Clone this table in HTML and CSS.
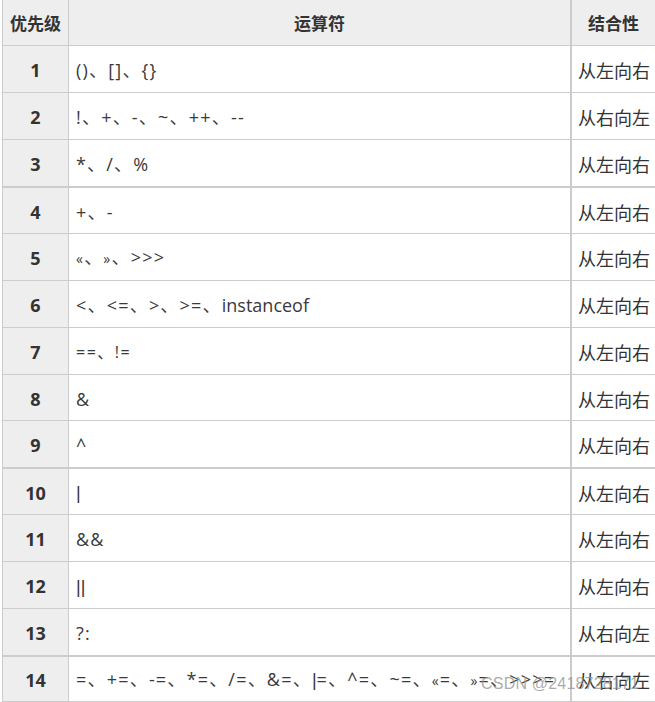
FILE: index.html
```html
<!DOCTYPE html>
<html lang="zh-CN">
<head>
<meta charset="utf-8">
<title>运算符优先级</title>
<link rel="stylesheet" href="styles.css">
</head>
<body>
<div class="page">
<table class="prec">
  <thead>
    <tr><th class="c-lvl">优先级</th><th class="c-op">运算符</th><th class="c-as">结合性</th></tr>
  </thead>
  <tbody>
    <tr class="h47"><td class="c-lvl">1</td><td class="c-op">()、[]、{}</td><td class="c-as">从左向右</td></tr>
    <tr class="h47"><td class="c-lvl">2</td><td class="c-op">!、+、-、~、++、--</td><td class="c-as">从右向左</td></tr>
    <tr class="h48 sep"><td class="c-lvl">3</td><td class="c-op">*、/、%</td><td class="c-as">从左向右</td></tr>
    <tr class="h46"><td class="c-lvl">4</td><td class="c-op">+、-</td><td class="c-as">从左向右</td></tr>
    <tr class="h47"><td class="c-lvl">5</td><td class="c-op"><span class="tiny">«</span>、<span class="tiny">»</span>、&gt;&gt;&gt;</td><td class="c-as">从左向右</td></tr>
    <tr class="h47"><td class="c-lvl">6</td><td class="c-op">&lt;、&lt;=、&gt;、&gt;=、<span class="word">instanceof</span></td><td class="c-as">从左向右</td></tr>
    <tr class="h47"><td class="c-lvl">7</td><td class="c-op small">==、!=</td><td class="c-as">从左向右</td></tr>
    <tr class="h46"><td class="c-lvl">8</td><td class="c-op">&amp;</td><td class="c-as">从左向右</td></tr>
    <tr class="h48 sep"><td class="c-lvl">9</td><td class="c-op">^</td><td class="c-as">从左向右</td></tr>
    <tr class="h46"><td class="c-lvl">10</td><td class="c-op"><span class="pipe">|</span></td><td class="c-as">从左向右</td></tr>
    <tr class="h47"><td class="c-lvl">11</td><td class="c-op">&amp;&amp;</td><td class="c-as">从左向右</td></tr>
    <tr class="h47"><td class="c-lvl">12</td><td class="c-op"><span class="pipe">||</span></td><td class="c-as">从左向右</td></tr>
    <tr class="h48 sep"><td class="c-lvl">13</td><td class="c-op">?:</td><td class="c-as">从右向左</td></tr>
    <tr class="h45"><td class="c-lvl">14</td><td class="c-op">=、+=、-=、*=、/=、&amp;=、<span class="pipe">|</span>=、^=、~=、<span class="tiny">«</span>=、<span class="tiny">»</span>=、&gt;&gt;&gt;=</td><td class="c-as">从右向左</td></tr>
  </tbody>
</table>
<div class="watermark">CSDN @2418728171</div>
</div>
</body>
</html>
```

FILE: styles.css
```css
html, body {
  margin: 0;
  padding: 0;
  background: #ffffff;
}

.page {
  position: relative;
  width: 655px;
  height: 702px;
  overflow: hidden;
  padding-left: 2px;
  box-sizing: border-box;
}

.prec {
  border-collapse: separate;
  border-spacing: 0;
  table-layout: fixed;
  width: 653px;
  border-left: 1px solid #cccccc;
  font-family: "Open Sans", "Noto Sans CJK SC", sans-serif;
  font-size: 18px;
  color: #333333;
}

.prec th,
.prec td {
  box-sizing: border-box;
  padding: 2px 0 0 0;
  border-bottom: 1px solid #cccccc;
  border-right: 1px solid #cccccc;
  vertical-align: middle;
  white-space: nowrap;
  overflow: hidden;
  line-height: 24px;
}

.prec th {
  height: 46px;
  padding-top: 0;
  background: #eeeeee;
  font-family: "Noto Sans CJK SC", sans-serif;
  font-weight: 700;
  font-size: 17px;
  text-align: center;
}

.c-lvl {
  width: 66px;
}

.c-op {
  width: 503px;
}

.prec .c-op {
  border-right-width: 2px;
}

.c-as {
  width: 83px;
}

.prec .c-as {
  border-right: none;
}

.prec td.c-lvl {
  background: #eeeeee;
  font-weight: 700;
  text-align: center;
}

.prec td.c-op {
  padding-left: 7px;
  text-align: left;
  letter-spacing: 1.2px;
  color: #3a3a3a;
}

.prec td.c-as {
  padding-left: 6px;
  font-family: "Noto Sans CJK SC", sans-serif;
  font-size: 18px;
  text-align: left;
}

.prec td.small {
  font-size: 16px;
  letter-spacing: 1.5px;
}

.tiny {
  font-size: 14px;
}

.word {
  letter-spacing: 0;
}

.pipe {
  font-family: "Liberation Sans", sans-serif;
  color: #333333;
  letter-spacing: 0;
}

.h45 td { height: 45px; }
.h46 td { height: 46px; }
.h47 td { height: 47px; }
.h48 td { height: 48px; }

.prec tr.sep td {
  border-bottom-width: 2px;
}

.watermark {
  position: absolute;
  left: 481px;
  top: 675px;
  font-family: "Liberation Sans", Arial, sans-serif;
  font-size: 16px;
  color: rgba(150, 150, 150, 0.8);
  letter-spacing: 0.2px;
  pointer-events: none;
}
```
